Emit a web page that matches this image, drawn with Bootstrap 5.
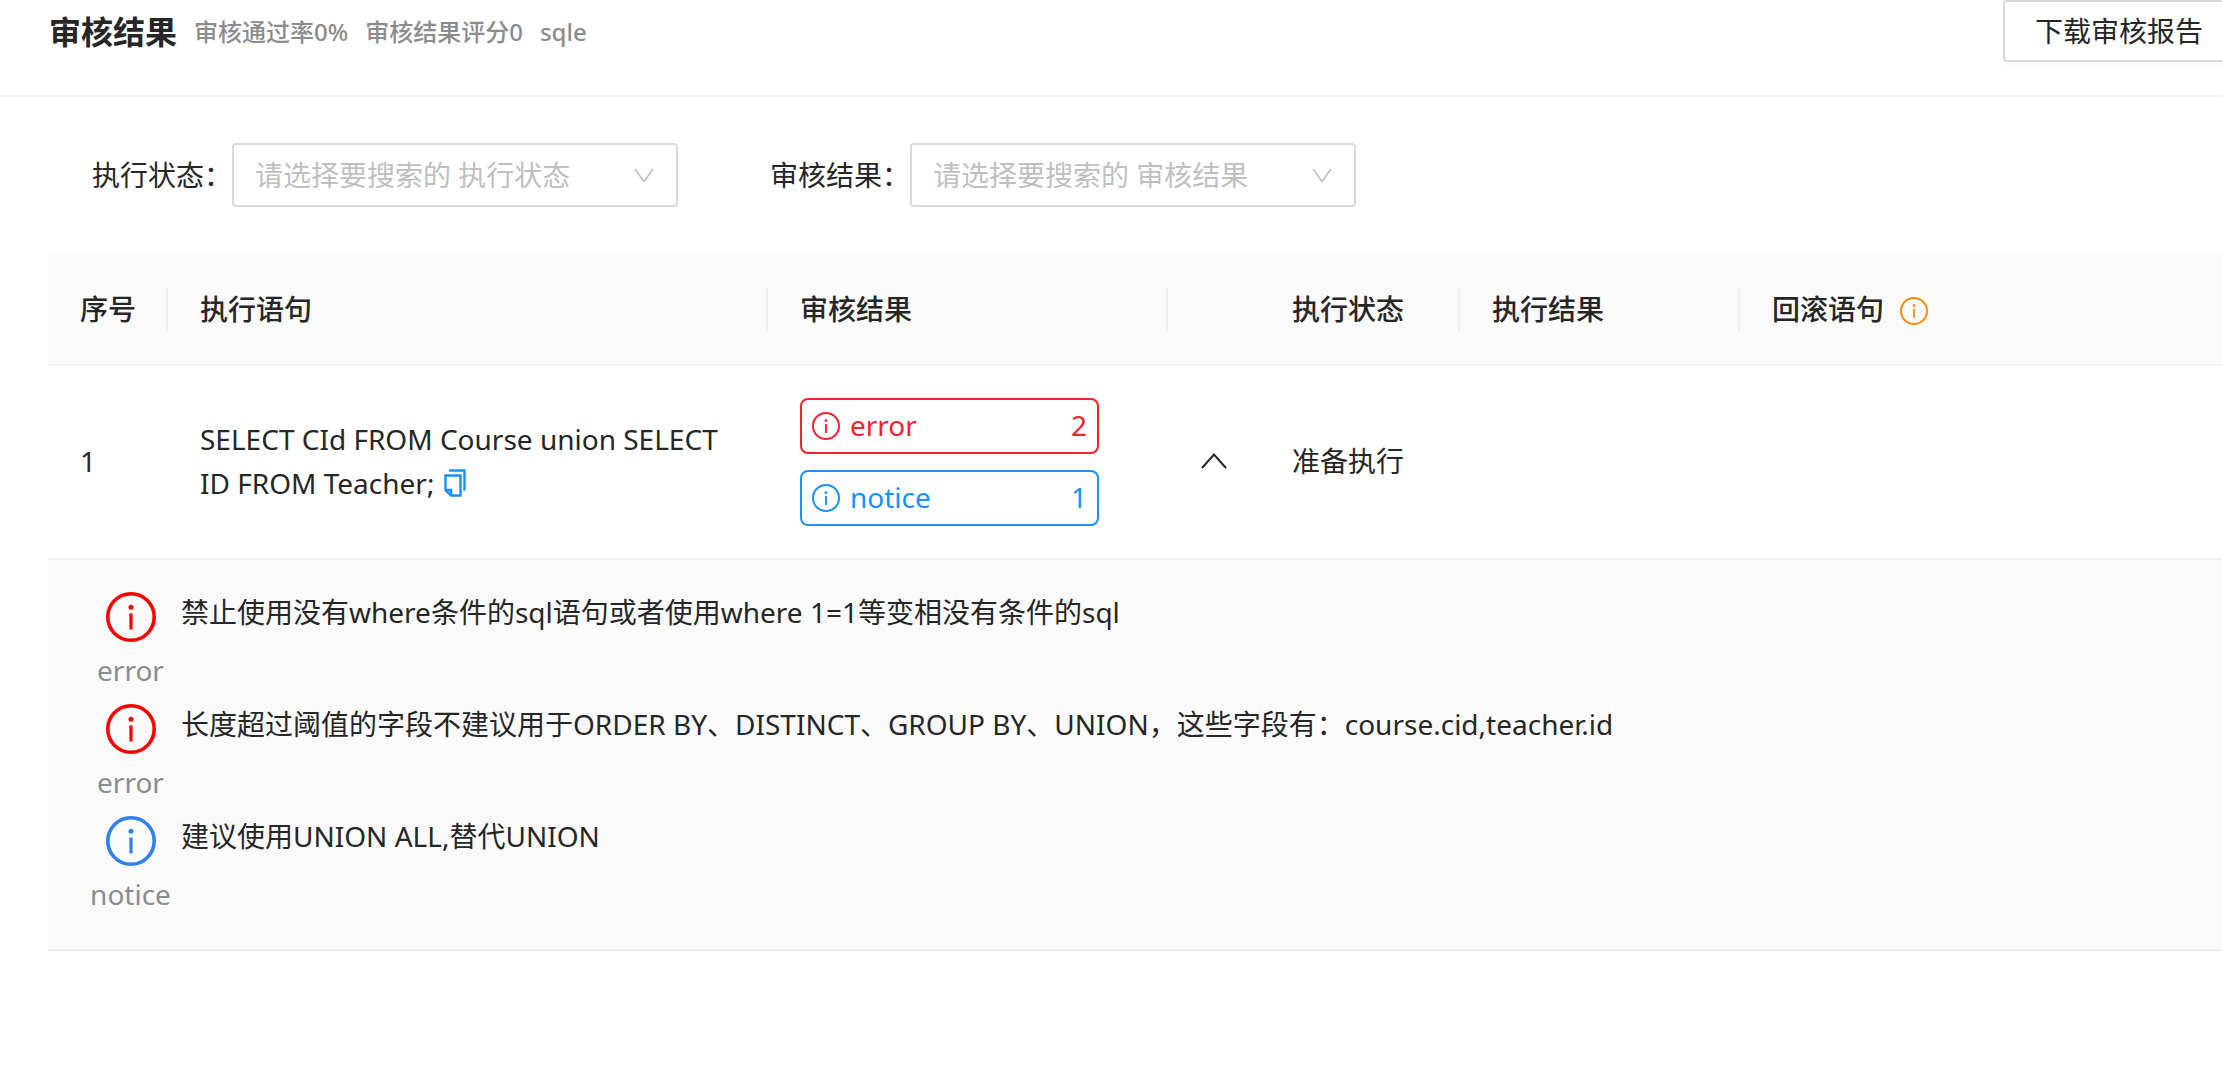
<!DOCTYPE html>
<html>
<head>
  <meta charset="utf-8">
  <title>审核结果</title>
  <link href="https://cdn.jsdelivr.net/npm/bootstrap@5.3.2/dist/css/bootstrap.min.css" rel="stylesheet">
  <style>
    html, body { overflow: hidden; height: 100%; }
    body { font-family: "Noto Sans", "Noto Sans CJK SC", sans-serif; font-size: 28px; line-height: 44px; color: #262626; background: #fff; }
    .page-head { height: 97px; border-bottom: 2px solid #f0f0f0; padding-left: 49px; }
    .page-title { font-size: 32px; font-weight: 600; line-height: 62px; margin: 0; }
    .page-sub { font-size: 24px; line-height: 64px; color: #8c8c8c; font-weight: 500; margin-left: 17px; }
    .page-sub span { margin-right: 17px; }
    .report-btn { width: 231px; height: 62px; margin-right: -12px; font-size: 28px; line-height: 44px; padding: 0 30px; border: 2px solid #d9d9d9; border-radius: 4px; background: #fff; color: #262626; white-space: nowrap; box-shadow: 0 4px 0 rgba(0,0,0,.015); }
    .filter-bar { padding: 46px 0 0 92px; height: 158px; }
    .filter-item { width: 446px; height: 64px; border: 2px solid #d9d9d9; border-radius: 4px; padding: 0 22px 0 21px; color: #bfbfbf; }
    .filter-label { width: 140px; height: 64px; }
    .filter-gap { width: 92px; }
    .result-wrap { margin-left: 48px; width: 2400px; }
    .result-table { table-layout: fixed; width: 2400px; margin: 0; border-collapse: collapse; }
    .result-table th, .result-table td { padding: 31px 32px 33px; vertical-align: middle; font-size: 28px; line-height: 44px; color: #262626; }
    .result-table thead th { background: #fafafa; font-weight: 500; border-bottom: 2px solid #f0f0f0; position: relative; height: 110px; }
    .result-table tbody td { height: 194px; border-bottom: 2px solid #f0f0f0; }
    .col-split::after { content: ""; position: absolute; right: 0; top: 32px; height: 44px; width: 2px; background: #f0f0f0; }
    .result-table td.expand-cell { padding: 32px; height: 391px; background: #fafafa; border-bottom: 2px solid #f0f0f0; vertical-align: top; }
    .result-table td.tag-cell { padding: 32px; }
    .arrow-cell { padding: 0 !important; }
    .arrow-cell svg { display: block; margin: 0 0 2px 33px; }
    .audit-tag { height: 56px; width: 299px; border: 2px solid; border-radius: 8px; padding: 0 10px; }
    .audit-tag + .audit-tag { margin-top: 16px; }
    .tag-label { margin-left: 10px; }
    .tag-text { margin-top: -2px; }
    .tag-error { color: #f5222d; border-color: #f5222d; }
    .tag-notice { color: #1890ff; border-color: #1890ff; }
    .copy-icon { color: #1890ff; vertical-align: -3px; margin-left: 2px; }
    .msg-row + .msg-row { margin-top: 14px; }
    .msg-level { width: 101px; color: #8c8c8c; text-align: center; line-height: 40px; }
    .msg-level svg { display: block; margin: 0 auto 8px; }
    .msg-text { margin-top: -2px; }
    .text-err { color: #f00; }
    .text-note { color: #2f80ed; }
    .text-warn { color: #fa8c16; }
    .head-info { vertical-align: -5px; }
  </style>
</head>
<body>
  <svg width="0" height="0" class="d-block">
    <symbol id="info" viewBox="0 0 28 28">
      <circle cx="14" cy="14" r="13" fill="none" stroke="currentColor" stroke-width="2"/>
      <circle cx="14" cy="8.6" r="1.4" fill="currentColor"/>
      <rect x="13.1" y="12" width="1.8" height="9" fill="currentColor"/>
    </symbol>
  </svg>

  <div class="page-head d-flex justify-content-between align-items-start">
    <div class="d-flex align-items-center">
      <h1 class="page-title">审核结果</h1>
      <div class="page-sub"><span>审核通过率0%</span><span>审核结果评分0</span><span>sqle</span></div>
    </div>
    <button class="report-btn" type="button">下载审核报告</button>
  </div>

  <div class="filter-bar d-flex">
    <div class="filter-label d-flex align-items-center">执行状态：</div>
    <div class="filter-item d-flex align-items-center justify-content-between">
      <span>请选择要搜索的 执行状态</span>
      <svg width="20" height="15" viewBox="0 0 20 15"><path d="M1 1l9 12.5L19 1" fill="none" stroke="#bfbfbf" stroke-width="1.6"/></svg>
    </div>
    <div class="filter-gap"></div>
    <div class="filter-label d-flex align-items-center">审核结果：</div>
    <div class="filter-item d-flex align-items-center justify-content-between">
      <span>请选择要搜索的 审核结果</span>
      <svg width="20" height="15" viewBox="0 0 20 15"><path d="M1 1l9 12.5L19 1" fill="none" stroke="#bfbfbf" stroke-width="1.6"/></svg>
    </div>
  </div>

  <div class="result-wrap">
    <table class="result-table">
      <colgroup>
        <col style="width:120px"><col style="width:600px"><col style="width:400px"><col style="width:92px"><col style="width:200px"><col style="width:280px"><col>
      </colgroup>
      <thead>
        <tr>
          <th class="col-split">序号</th>
          <th class="col-split">执行语句</th>
          <th class="col-split">审核结果</th>
          <th></th>
          <th class="col-split">执行状态</th>
          <th class="col-split">执行结果</th>
          <th>回滚语句<svg class="text-warn head-info ms-3" width="28" height="28"><use href="#info"/></svg></th>
        </tr>
      </thead>
      <tbody>
        <tr>
          <td>1</td>
          <td>SELECT CId FROM Course union SELECT ID FROM Teacher;
            <svg class="copy-icon" width="22" height="28" viewBox="0 0 22 28" fill="none" stroke="currentColor" stroke-width="2.4"><path d="M5 1.5h15.500v20"/><path d="M1.5 6.500h15v20H7l-5.500-5.500z"/><path d="M1.500 21h5.500v5.500"/></svg>
          </td>
          <td class="tag-cell">
            <div class="audit-tag tag-error d-flex align-items-center">
              <svg width="28" height="28"><use href="#info"/></svg>
              <span class="tag-label tag-text flex-grow-1">error</span><span class="tag-text">2</span>
            </div>
            <div class="audit-tag tag-notice d-flex align-items-center">
              <svg width="28" height="28"><use href="#info"/></svg>
              <span class="tag-label tag-text flex-grow-1">notice</span><span class="tag-text">1</span>
            </div>
          </td>
          <td class="arrow-cell"><svg width="26" height="16" viewBox="0 0 26 16"><path d="M1 15L13 1.500 25 15" fill="none" stroke="#262626" stroke-width="2"/></svg></td>
          <td>准备执行</td>
          <td></td>
          <td></td>
        </tr>
        <tr>
          <td class="expand-cell" colspan="7">
            <div class="msg-row d-flex">
              <div class="msg-level"><svg class="text-err" width="50" height="50"><use href="#info"/></svg>error</div>
              <div class="msg-text">禁止使用没有where条件的sql语句或者使用where 1=1等变相没有条件的sql</div>
            </div>
            <div class="msg-row d-flex">
              <div class="msg-level"><svg class="text-err" width="50" height="50"><use href="#info"/></svg>error</div>
              <div class="msg-text">长度超过阈值的字段不建议用于ORDER BY、DISTINCT、GROUP BY、UNION，这些字段有：course.cid,teacher.id</div>
            </div>
            <div class="msg-row d-flex">
              <div class="msg-level"><svg class="text-note" width="50" height="50"><use href="#info"/></svg>notice</div>
              <div class="msg-text">建议使用UNION ALL,替代UNION</div>
            </div>
          </td>
        </tr>
      </tbody>
    </table>
  </div>

  <script src="https://cdn.jsdelivr.net/npm/bootstrap@5.3.2/dist/js/bootstrap.bundle.min.js"></script>
</body>
</html>
